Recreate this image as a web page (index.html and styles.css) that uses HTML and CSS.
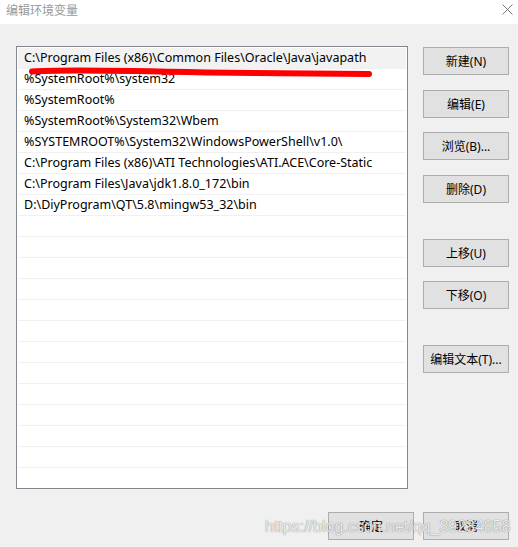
FILE: index.html
```html
<!DOCTYPE html>
<html lang="zh-CN">

<head>
    <meta charset="UTF-8">
    <meta name="viewport" content="width=device-width, initial-scale=1.0">
    <title>编辑环境变量</title>
    <link rel="stylesheet" href="styles.css">
</head>

<body>
    <div class="window">
        <div class="title-bar">
            <span class="title">编辑环境变量</span>
            <svg class="close" width="11" height="11" viewBox="0 0 11 11">
                <path d="M0.5 0.5 L10.5 10.5 M10.5 0.5 L0.5 10.5" stroke="#7a7a7a" stroke-width="1" fill="none" />
            </svg>
        </div>

        <div class="content">
            <div class="path-list">
                <div class="row selected">C:\Program Files (x86)\Common Files\Oracle\Java\javapath</div>
                <div class="row">%SystemRoot%\system32</div>
                <div class="row">%SystemRoot%</div>
                <div class="row">%SystemRoot%\System32\Wbem</div>
                <div class="row">%SYSTEMROOT%\System32\WindowsPowerShell\v1.0\</div>
                <div class="row">C:\Program Files (x86)\ATI Technologies\ATI.ACE\Core-Static</div>
                <div class="row">C:\Program Files\Java\jdk1.8.0_172\bin</div>
                <div class="row">D:\DiyProgram\QT\5.8\mingw53_32\bin</div>
                <div class="row"></div>
                <div class="row"></div>
                <div class="row"></div>
                <div class="row"></div>
                <div class="row"></div>
                <div class="row"></div>
                <div class="row"></div>
                <div class="row"></div>
                <div class="row"></div>
                <div class="row"></div>
                <div class="row"></div>
                <div class="row"></div>
                <div class="row"></div>
                <div class="row"></div>

                <!-- hand drawn red mark under the first entry -->
                <svg class="scribble" width="392" height="40" viewBox="0 0 392 40">
                    <path d="M15 24.5 C 45 22, 110 23.5, 190 25.5 L 352 27" stroke="#ff0000" stroke-width="6" stroke-linecap="round" fill="none" />
                </svg>
            </div>

            <div class="side-buttons">
                <div class="btn-group">
                    <button class="btn">新建(N)</button>
                    <button class="btn">编辑(E)</button>
                    <button class="btn">浏览(B)...</button>
                    <button class="btn">删除(D)</button>
                </div>
                <div class="btn-group">
                    <button class="btn">上移(U)</button>
                    <button class="btn">下移(O)</button>
                </div>
                <div class="btn-group">
                    <button class="btn">编辑文本(T)...</button>
                </div>
            </div>
        </div>

        <div class="footer">
            <button class="btn">确定</button>
            <button class="btn">取消</button>
            <span class="watermark">https://blog.csdn.net/qq_39234858</span>
        </div>
    </div>
</body>

</html>
```

FILE: styles.css
```css
body {
    margin: 0;
    background-color: #f0f0f0;
    font-family: 'Noto Sans', 'Noto Sans CJK SC', sans-serif;
    font-size: 12px;
    color: #000;
}

.window {
    position: relative;
    width: 518px;
    height: 547px;
    overflow: hidden;
    background-color: #f0f0f0;
}

/* Title bar */
.title-bar {
    height: 24px;
    background-color: #fff;
    display: flex;
    justify-content: space-between;
    align-items: flex-start;
    padding: 0 5px 0 6px;
}

.title {
    margin-top: 2px;
    color: #999;
    font-family: 'Noto Sans CJK SC', sans-serif;
    font-size: 12px;
    line-height: 16px;
}

.close {
    margin-top: 4px;
}

/* Main area */
.content {
    display: flex;
    gap: 15px;
    padding: 22px 0 0 16px;
}

.path-list {
    position: relative;
    width: 390px;
    height: 440px;
    padding-top: 1px;
    box-sizing: content-box;
    background-color: #fff;
    border: 1px solid #828790;
    overflow: hidden;
}

.path-list .row {
    height: 20px;
    line-height: 20px;
    margin: 0 1px;
    padding-left: 6px;
    border-bottom: 1px solid #f0f0f0;
    white-space: nowrap;
    font-size: 12.5px;
}

.path-list .row.selected {
    background-color: #f2f2f2;
}

.scribble {
    position: absolute;
    left: 0;
    top: 0;
    pointer-events: none;
}

.side-buttons {
    display: flex;
    flex-direction: column;
    gap: 36px;
    margin-top: 1px;
}

.btn-group {
    display: flex;
    flex-direction: column;
    gap: 14.5px;
}

.btn {
    width: 86px;
    height: 28px;
    padding: 0;
    background-color: #e1e1e1;
    border: 1px solid #adadad;
    border-radius: 0;
    color: #000;
    font-family: 'Noto Sans', 'Noto Sans CJK SC', sans-serif;
    font-size: 12px;
    cursor: pointer;
}

/* Bottom buttons */
.footer {
    display: flex;
    justify-content: flex-end;
    gap: 9px;
    margin-top: 23px;
    padding-right: 9px;
}

.watermark {
    position: absolute;
    left: 265px;
    top: 517px;
    font-family: 'Liberation Sans', sans-serif;
    font-size: 16px;
    line-height: 20px;
    color: rgba(255, 255, 255, 0.85);
    text-shadow: 0 0 1px rgba(80, 80, 80, 0.6), 0 0 1px rgba(80, 80, 80, 0.4);
    pointer-events: none;
    white-space: nowrap;
}
```
